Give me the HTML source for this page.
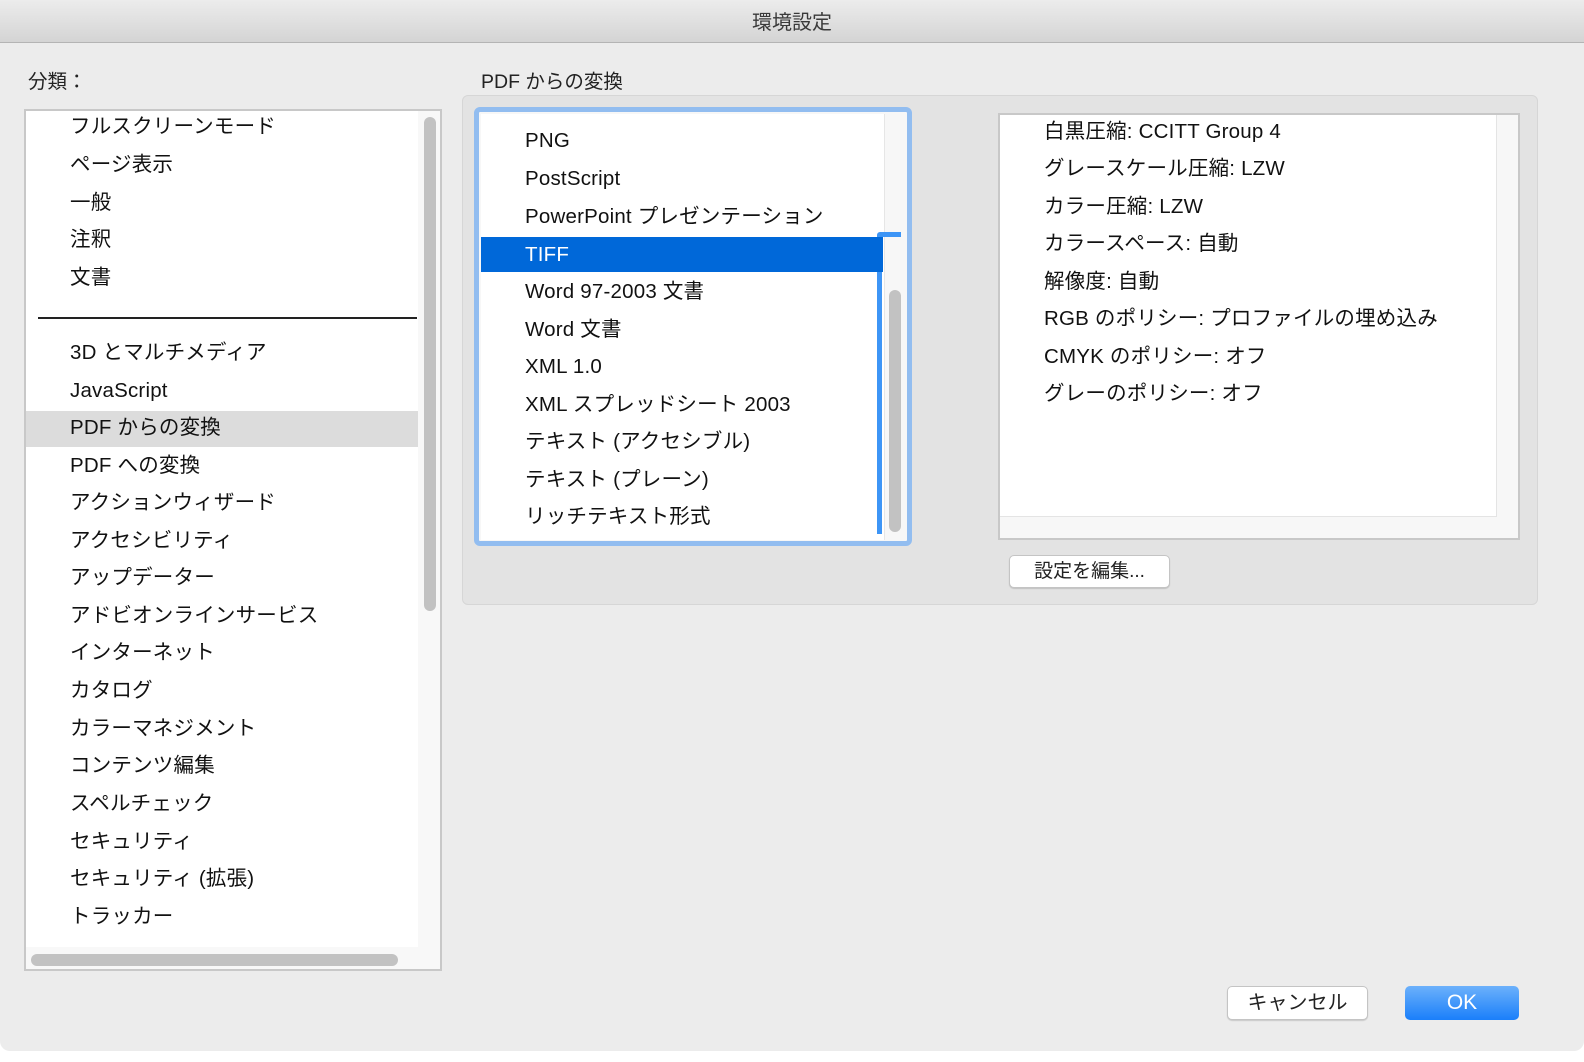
<!DOCTYPE html>
<html><head><meta charset="utf-8"><style>
*{margin:0;padding:0;box-sizing:border-box}
body{width:1584px;height:1062px;background:#fff;position:relative;overflow:hidden;font-family:"Liberation Sans","Noto Sans CJK JP",sans-serif;color:#111}
.win{position:absolute;left:0;top:0;width:1584px;height:1051px;background:#ececec;border-radius:0 0 10px 10px;overflow:hidden}
.title{position:absolute;left:0;top:0;width:1584px;height:43px;background:linear-gradient(#ececec,#d4d4d4);border-bottom:1px solid #b4b4b4;text-align:center;font-size:20px;line-height:46px;color:#3a3a3a}
.abs{position:absolute}
.lbl{position:absolute;font-size:19.5px;line-height:24px;color:#222}
.item{position:absolute;font-size:20.5px;line-height:24px;white-space:nowrap;letter-spacing:0.2px}
.btn{position:absolute;background:#fff;border:1px solid #c4c4c4;border-radius:5px;box-shadow:0 1px 1px rgba(0,0,0,.15);text-align:center;font-size:19px;color:#222}
</style></head><body><div class="win">
<div class="title">環境設定</div>
<div class="lbl" style="left:28px;top:70px">分類：</div>
<div class="lbl" style="left:481px;top:70px">PDF からの変換</div>

<div class="abs" style="left:24px;top:109px;width:418px;height:862px;border:2px solid #c8c8c8;background:#f8f8f8"></div>
<div class="abs" style="left:26px;top:111px;width:392px;height:836px;background:#fff;overflow:hidden">
<div class="abs" style="left:0;top:300px;width:392px;height:36px;background:#dcdcdc"></div>
<div class="abs" style="left:12px;top:206px;width:379px;height:2px;background:#222"></div>
</div>
<div class="abs" style="left:424px;top:117px;width:12px;height:494px;border-radius:6px;background:#c2c2c2"></div>
<div class="abs" style="left:31px;top:954px;width:367px;height:12px;border-radius:6px;background:#c2c2c2"></div>
<div class="item" style="left:70px;top:115px">フルスクリーンモード</div>
<div class="item" style="left:70px;top:153px">ページ表示</div>
<div class="item" style="left:70px;top:191px">一般</div>
<div class="item" style="left:70px;top:228px">注釈</div>
<div class="item" style="left:70px;top:266px">文書</div>
<div class="item" style="left:70px;top:341px">3D とマルチメディア</div>
<div class="item" style="left:70px;top:379px">JavaScript</div>
<div class="item" style="left:70px;top:416px">PDF からの変換</div>
<div class="item" style="left:70px;top:454px">PDF への変換</div>
<div class="item" style="left:70px;top:491px">アクションウィザード</div>
<div class="item" style="left:70px;top:529px">アクセシビリティ</div>
<div class="item" style="left:70px;top:566px">アップデーター</div>
<div class="item" style="left:70px;top:604px">アドビオンラインサービス</div>
<div class="item" style="left:70px;top:641px">インターネット</div>
<div class="item" style="left:70px;top:679px">カタログ</div>
<div class="item" style="left:70px;top:717px">カラーマネジメント</div>
<div class="item" style="left:70px;top:754px">コンテンツ編集</div>
<div class="item" style="left:70px;top:792px">スペルチェック</div>
<div class="item" style="left:70px;top:830px">セキュリティ</div>
<div class="item" style="left:70px;top:867px">セキュリティ (拡張)</div>
<div class="item" style="left:70px;top:905px">トラッカー</div>

<div class="abs" style="left:462px;top:95px;width:1076px;height:510px;background:#e3e3e3;border:1px solid #d6d6d6;border-radius:6px"></div>

<div class="abs" style="left:474px;top:107px;width:438px;height:439px;border:5px solid #92bdf0;border-radius:6px;background:#f7f7f7"></div>
<div class="abs" style="left:481px;top:114px;width:403px;height:426px;background:#fff"></div>
<div class="abs" style="left:884px;top:114px;width:1px;height:426px;background:#e6e6e6"></div>
<div class="abs" style="left:889px;top:290px;width:12px;height:242px;border-radius:6px;background:#c2c2c2"></div>
<div class="abs" style="left:481px;top:237px;width:402px;height:35px;background:#0068d9"></div>
<div class="abs" style="left:877px;top:232px;width:24px;height:5px;background:#3d95f6;border-radius:3px 0 0 0"></div>
<div class="abs" style="left:877px;top:272px;width:5px;height:262px;background:#3d95f6"></div>
<div class="item" style="left:525px;top:129px">PNG</div>
<div class="item" style="left:525px;top:167px">PostScript</div>
<div class="item" style="left:525px;top:205px">PowerPoint プレゼンテーション</div>
<div class="item" style="left:525px;top:243px;color:#fff">TIFF</div>
<div class="item" style="left:525px;top:280px">Word 97-2003 文書</div>
<div class="item" style="left:525px;top:318px">Word 文書</div>
<div class="item" style="left:525px;top:355px">XML 1.0</div>
<div class="item" style="left:525px;top:393px">XML スプレッドシート 2003</div>
<div class="item" style="left:525px;top:430px">テキスト (アクセシブル)</div>
<div class="item" style="left:525px;top:468px">テキスト (プレーン)</div>
<div class="item" style="left:525px;top:505px">リッチテキスト形式</div>

<div class="abs" style="left:998px;top:113px;width:522px;height:427px;border:2px solid #c8c8c8;background:#f7f7f7"></div>
<div class="abs" style="left:1000px;top:115px;width:497px;height:402px;background:#fff;border-right:1px solid #e4e4e4;border-bottom:1px solid #e4e4e4"></div>
<div class="item" style="left:1044px;top:120px">白黒圧縮: CCITT Group 4</div>
<div class="item" style="left:1044px;top:157px">グレースケール圧縮: LZW</div>
<div class="item" style="left:1044px;top:195px">カラー圧縮: LZW</div>
<div class="item" style="left:1044px;top:232px">カラースペース: 自動</div>
<div class="item" style="left:1044px;top:270px">解像度: 自動</div>
<div class="item" style="left:1044px;top:307px">RGB のポリシー: プロファイルの埋め込み</div>
<div class="item" style="left:1044px;top:345px">CMYK のポリシー: オフ</div>
<div class="item" style="left:1044px;top:382px">グレーのポリシー: オフ</div>

<div class="btn" style="left:1009px;top:555px;width:161px;height:33px;line-height:31px">設定を編集...</div>
<div class="btn" style="left:1227px;top:986px;width:141px;height:34px;line-height:32px;font-size:20px">キャンセル</div>
<div class="abs" style="left:1405px;top:986px;width:114px;height:34px;border-radius:5px;background:linear-gradient(#6cb1fb,#1a7ffa);color:#fff;text-align:center;font-size:21px;line-height:34px">OK</div>
</div></body></html>
